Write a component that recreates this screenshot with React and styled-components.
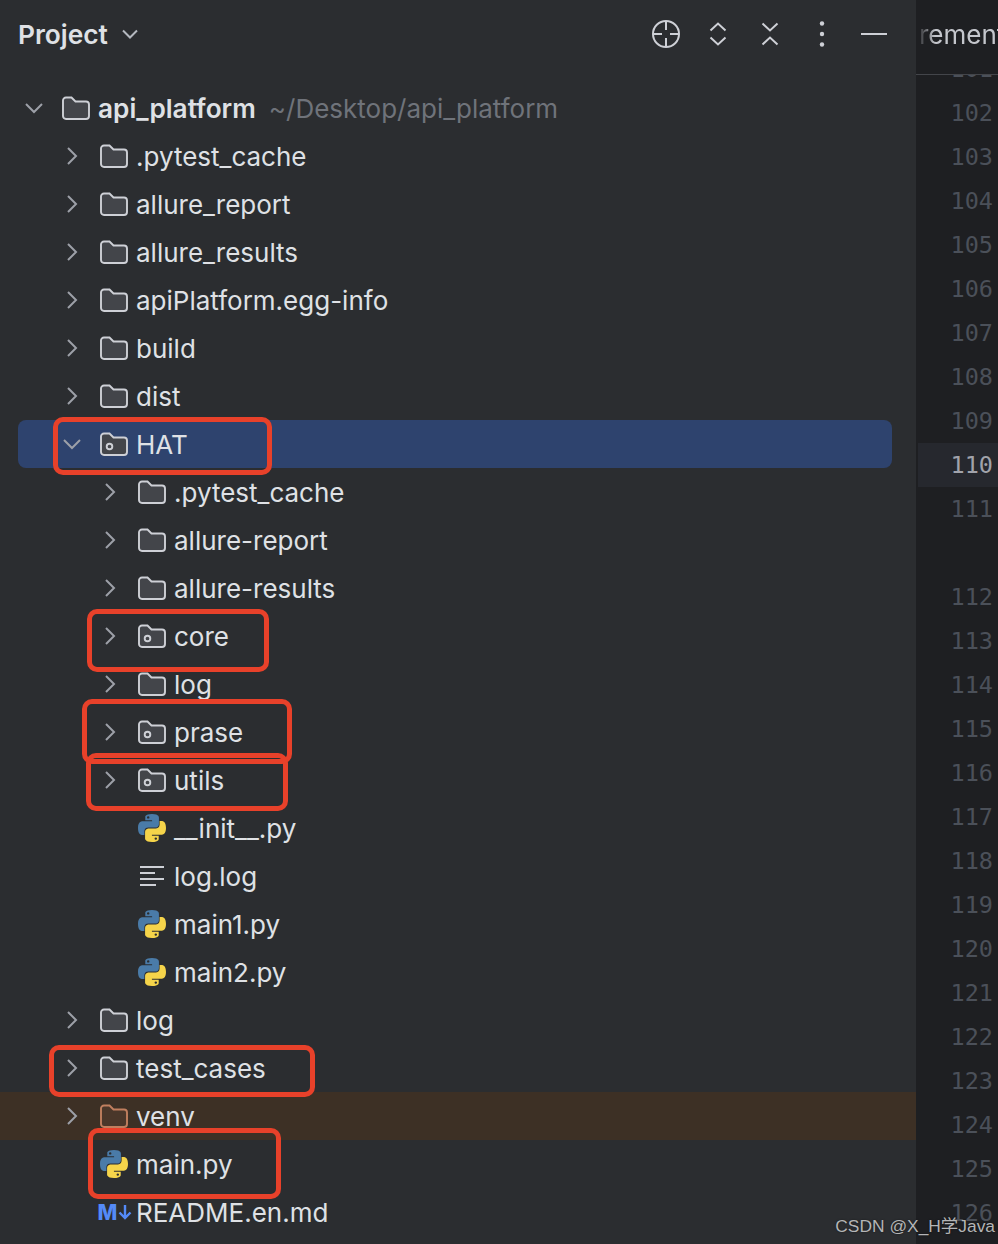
import React from "react";
import styled, { createGlobalStyle } from "styled-components";

const GlobalStyle = createGlobalStyle`
  html, body {
    margin: 0;
    padding: 0;
    background: #2b2d30;
  }
  body {
    font-family: Inter, "Noto Sans", sans-serif;
    -webkit-font-smoothing: antialiased;
  }
`;

const Window = styled.div`
  position: relative;
  display: flex;
  width: 998px;
  height: 1244px;
  overflow: hidden;
  background: #2b2d30;
`;

const Panel = styled.div`
  width: 916px;
  flex-shrink: 0;
  background: #2b2d30;
`;

const PanelHeader = styled.header`
  display: flex;
  align-items: center;
  justify-content: space-between;
  height: 68px;
  padding: 0 16px 0 18px;
  margin-bottom: 16px;
`;

const PanelTitle = styled.div`
  display: flex;
  align-items: center;
  gap: 14px;
  color: #dfe1e5;
  font-size: 26.3px;
  font-weight: 600;
`;

const HeaderIcons = styled.div`
  display: flex;
  align-items: center;
`;

const IconButton = styled.div`
  display: flex;
  align-items: center;
  justify-content: center;
  width: 52px;
  height: 40px;
  color: #ced0d6;
`;

const Row = styled.div`
  display: flex;
  align-items: center;
  height: 48px;
  margin: ${p => (p.$ignored ? "0" : "0 24px 0 18px")};
  padding-left: ${p => (p.$ignored ? 18 : 0) + 6 + p.$depth * 38}px;
  background: ${p => (p.$selected ? "#2e436e" : p.$ignored ? "#3d3025" : "transparent")};
  border-radius: ${p => (p.$selected ? "8px" : "0")};
`;

const Arrow = styled.span`
  display: flex;
  align-items: center;
  justify-content: center;
  width: 20px;
  height: 24px;
  margin-right: 18px;
  color: #9da0a8;
`;

const FileIcon = styled.span`
  display: flex;
  align-items: center;
  justify-content: center;
  width: 28px;
  height: 28px;
  margin-right: 8px;
  flex-shrink: 0;
`;

const Label = styled.span`
  color: #dfe1e5;
  font-size: ${p => (p.$bold ? "26.2px" : "26px")};
  font-weight: ${p => (p.$bold ? 600 : 400)};
  white-space: nowrap;
`;

const PathHint = styled.span`
  margin-left: 13px;
  color: #6f737a;
  font-size: 26px;
  white-space: nowrap;
`;

const MdMark = styled.span`
  display: flex;
  align-items: center;
  gap: 1px;
  margin-left: 2px;
  color: #548af7;
  font-size: 21px;
  font-weight: 800;
`;

const Editor = styled.div`
  flex: 1;
  min-width: 0;
  background: #1e1f22;
`;

const TabStrip = styled.div`
  position: relative;
  z-index: 1;
  height: 75px;
  margin-bottom: -28px;
  padding-left: 3px;
  overflow: hidden;
  box-sizing: border-box;
  background: #1e1f22;
  border-bottom: 1px solid #43454a;
`;

const TabText = styled.div`
  margin-top: 19px;
  color: #c4c6cc;
  font-size: 26px;
  white-space: nowrap;
  -webkit-mask-image: linear-gradient(90deg, rgba(0, 0, 0, 0.1), #000 16px);
  mask-image: linear-gradient(90deg, rgba(0, 0, 0, 0.1), #000 16px);
`;

const LineNumber = styled.div`
  height: ${p => (p.$wrapped ? 88 : 44)}px;
  line-height: 44px;
  margin-left: 2px;
  padding-right: 5px;
  text-align: right;
  font-family: "DejaVu Sans Mono", "Liberation Mono", monospace;
  font-size: 23.5px;
  color: ${p => (p.$current ? "#a1a3ab" : "#4b5059")};
  background: ${p => (p.$current ? "#26282e" : "transparent")};
`;

const RedBox = styled.div`
  position: absolute;
  left: ${p => p.$x}px;
  top: ${p => p.$y}px;
  width: ${p => p.$w}px;
  height: ${p => p.$h}px;
  box-sizing: border-box;
  border: 5px solid #e8412a;
  border-radius: 10px;
`;

const Watermark = styled.div`
  position: absolute;
  right: 3px;
  bottom: 7px;
  color: #b4b5b6;
  font-family: "Liberation Sans", "Noto Sans CJK SC", sans-serif;
  font-size: 17.4px;
  text-shadow: 0 0 2px rgba(0, 0, 0, 0.5);
  white-space: nowrap;
`;

const ChevronRight = () => (
  <svg width="12" height="20" viewBox="0 0 12 20" fill="none" stroke="currentColor" strokeWidth="2">
    <path d="M2 2l8 8-8 8" />
  </svg>
);

const ChevronDown = () => (
  <svg width="18" height="12" viewBox="0 0 18 12" fill="none" stroke="currentColor" strokeWidth="2">
    <path d="M1 2l8 8 8-8" />
  </svg>
);

const ChevronDownSmall = () => (
  <svg width="16" height="10" viewBox="0 0 16 10" fill="none" stroke="#b4b8bf" strokeWidth="2">
    <path d="M1 1.5l7 7 7-7" />
  </svg>
);

const FolderIcon = ({ module, ignored }) => {
  const stroke = ignored ? "#c07f5f" : "#ced0d6";
  const fill = ignored ? "#4a372a" : "#43454a";
  return (
    <svg width="28" height="24" viewBox="0 0 28 24" fill={fill} stroke={stroke} strokeWidth="1.9">
      <path d="M1 4.5A3 3 0 0 1 4 1.5h5.5l4 4H24a3 3 0 0 1 3 3V20a3 3 0 0 1-3 3H4a3 3 0 0 1-3-3z" />
      {module && <circle cx="9.5" cy="14.5" r="2.8" fill="none" />}
    </svg>
  );
};

const PYTHON_PATH =
  "M54.9 0C26.9 0 28.6 12.2 28.6 12.2l0 12.6h26.7v3.8H18S0 26.6 0 54.9c0 28.3 15.7 27.3 15.7 27.3h9.4V69.1s-.5-15.7 15.5-15.7h26.6s15 .2 15-14.5V14.6S84.5 0 54.9 0zM40.1 8.5a4.8 4.8 0 1 1 0 9.6 4.8 4.8 0 0 1 0-9.6z";

const PythonIcon = () => (
  <svg width="28" height="28" viewBox="0 0 110 110">
    <path d={PYTHON_PATH} fill="#4a7ba8" fillRule="evenodd" />
    <path d={PYTHON_PATH} fill="#f5d44a" fillRule="evenodd" transform="rotate(180 55 55)" />
  </svg>
);

const LogIcon = () => (
  <svg width="28" height="24" viewBox="0 0 28 24" stroke="#ced0d6" strokeWidth="2">
    <path d="M2 3h24M2 9h15M2 15h24M2 21h16" />
  </svg>
);

const MarkdownIcon = () => (
  <MdMark>
    M
    <svg width="14" height="16" viewBox="0 0 14 16" fill="none" stroke="#548af7" strokeWidth="2.4">
      <path d="M7 1v13M1.5 8.5L7 14l5.5-5.5" />
    </svg>
  </MdMark>
);

const LocateIcon = () => (
  <svg width="30" height="30" viewBox="0 0 30 30" fill="none" stroke="currentColor" strokeWidth="2">
    <circle cx="15" cy="15" r="13" />
    <path d="M15 2v9M15 19v9M2 15h9M19 15h9" />
  </svg>
);

const ExpandIcon = () => (
  <svg width="18" height="24" viewBox="0 0 18 24" fill="none" stroke="currentColor" strokeWidth="2">
    <path d="M1.5 8.5L9 1.5l7.5 7M1.5 15.5L9 22.5l7.5-7" />
  </svg>
);

const CollapseIcon = () => (
  <svg width="18" height="24" viewBox="0 0 18 24" fill="none" stroke="currentColor" strokeWidth="2">
    <path d="M1.5 1.5L9 8.5l7.5-7M1.5 22.5L9 15.5l7.5 7" />
  </svg>
);

const MoreIcon = () => (
  <svg width="6" height="28" viewBox="0 0 6 28" fill="currentColor">
    <circle cx="3" cy="3.5" r="2.2" />
    <circle cx="3" cy="14" r="2.2" />
    <circle cx="3" cy="24.5" r="2.2" />
  </svg>
);

const MinusIcon = () => (
  <svg width="26" height="4" viewBox="0 0 26 4" stroke="currentColor" strokeWidth="2">
    <path d="M0 2h26" />
  </svg>
);

const tree = [
  { name: "api_platform", depth: 0, kind: "folder", open: true, bold: true, hint: "~/Desktop/api_platform" },
  { name: ".pytest_cache", depth: 1, kind: "folder" },
  { name: "allure_report", depth: 1, kind: "folder" },
  { name: "allure_results", depth: 1, kind: "folder" },
  { name: "apiPlatform.egg-info", depth: 1, kind: "folder" },
  { name: "build", depth: 1, kind: "folder" },
  { name: "dist", depth: 1, kind: "folder" },
  { name: "HAT", depth: 1, kind: "module", open: true, selected: true },
  { name: ".pytest_cache", depth: 2, kind: "folder" },
  { name: "allure-report", depth: 2, kind: "folder" },
  { name: "allure-results", depth: 2, kind: "folder" },
  { name: "core", depth: 2, kind: "module" },
  { name: "log", depth: 2, kind: "folder" },
  { name: "prase", depth: 2, kind: "module" },
  { name: "utils", depth: 2, kind: "module" },
  { name: "__init__.py", depth: 2, kind: "python" },
  { name: "log.log", depth: 2, kind: "log" },
  { name: "main1.py", depth: 2, kind: "python" },
  { name: "main2.py", depth: 2, kind: "python" },
  { name: "log", depth: 1, kind: "folder" },
  { name: "test_cases", depth: 1, kind: "folder" },
  { name: "venv", depth: 1, kind: "folder", ignored: true },
  { name: "main.py", depth: 1, kind: "python" },
  { name: "README.en.md", depth: 1, kind: "markdown" },
];

const redBoxes = [
  { x: 53, y: 417, w: 219, h: 58 },
  { x: 87, y: 609, w: 182, h: 63 },
  { x: 82, y: 699, w: 210, h: 65 },
  { x: 86, y: 753, w: 202, h: 58 },
  { x: 49, y: 1045, w: 266, h: 52 },
  { x: 88, y: 1128, w: 193, h: 71 },
];

const lineNumbers = [];
for (let n = 101; n <= 126; n++) lineNumbers.push(n);

function TreeIcon({ item }) {
  if (item.kind === "python") return <PythonIcon />;
  if (item.kind === "log") return <LogIcon />;
  if (item.kind === "markdown") return <MarkdownIcon />;
  return <FolderIcon module={item.kind === "module"} ignored={item.ignored} />;
}

function TreeRow({ item }) {
  const isFolder = item.kind === "folder" || item.kind === "module";
  return (
    <Row $depth={item.depth} $selected={item.selected} $ignored={item.ignored}>
      <Arrow>{isFolder && (item.open ? <ChevronDown /> : <ChevronRight />)}</Arrow>
      <FileIcon>
        <TreeIcon item={item} />
      </FileIcon>
      <Label $bold={item.bold}>{item.name}</Label>
      {item.hint && <PathHint>{item.hint}</PathHint>}
    </Row>
  );
}

export default function App() {
  return (
    <Window>
      <GlobalStyle />
      <Panel>
        <PanelHeader>
          <PanelTitle>
            Project
            <ChevronDownSmall />
          </PanelTitle>
          <HeaderIcons>
            <IconButton><LocateIcon /></IconButton>
            <IconButton><ExpandIcon /></IconButton>
            <IconButton><CollapseIcon /></IconButton>
            <IconButton><MoreIcon /></IconButton>
            <IconButton><MinusIcon /></IconButton>
          </HeaderIcons>
        </PanelHeader>
        {tree.map((item, i) => (
          <TreeRow key={i} item={item} />
        ))}
      </Panel>
      <Editor>
        <TabStrip>
          <TabText>rement</TabText>
        </TabStrip>
        {lineNumbers.map(n => (
          <LineNumber key={n} $current={n === 110} $wrapped={n === 111}>
            {n}
          </LineNumber>
        ))}
      </Editor>
      {redBoxes.map((b, i) => (
        <RedBox key={i} $x={b.x} $y={b.y} $w={b.w} $h={b.h} />
      ))}
      <Watermark>CSDN @X_H学Java</Watermark>
    </Window>
  );
}
